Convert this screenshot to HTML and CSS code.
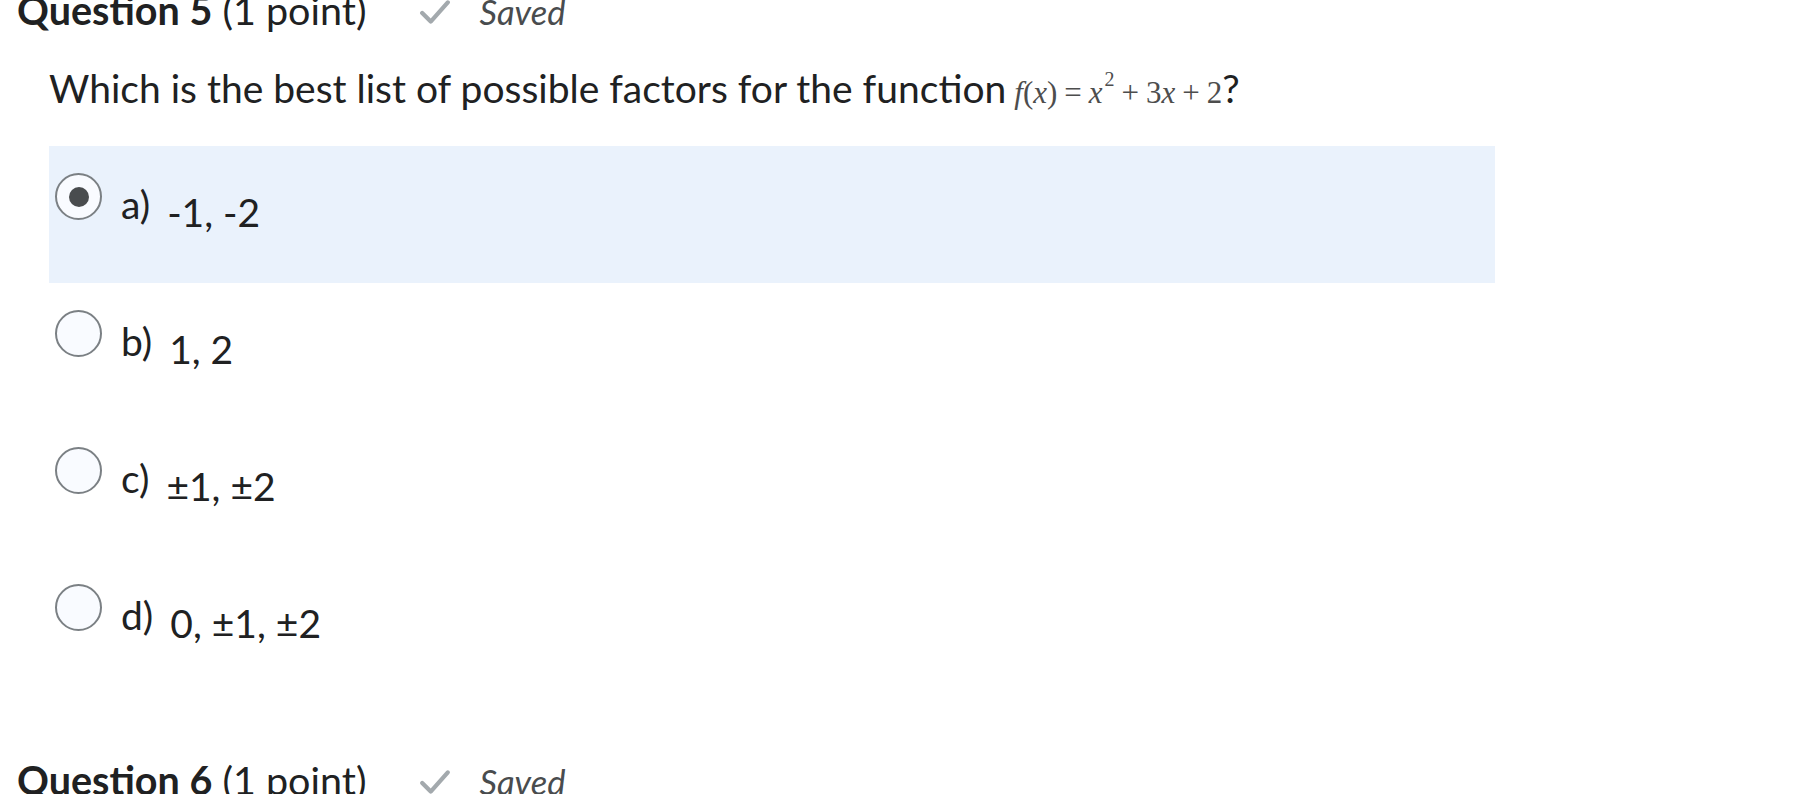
FILE: index.html
```html
<!DOCTYPE html>
<html lang="en">
<head>
<meta charset="utf-8">
<title>Quiz</title>
<link rel="stylesheet" href="styles.css">
</head>
<body>
<div class="page">
  <section class="question">
    <div class="q-head">
      <h2 class="q-title"><strong>Question 5</strong> (1 point)</h2>
      <span class="saved">
        <svg class="check" viewBox="0 0 30 24" width="30" height="24"><path d="M3 13 L11 21 L27 3" fill="none" stroke="#a3a9ad" stroke-width="4" stroke-linecap="round" stroke-linejoin="round"/></svg>
        <span class="saved-text">Saved</span>
      </span>
    </div>
    <p class="q-text">Which is the best list of possible factors for the function <span class="math"><i>f</i>(<i>x</i>)<span class="op">=</span><i>x</i><sup>2</sup><span class="op">+</span>3<i>x</i><span class="op">+</span>2</span>?</p>
    <div class="options">
      <div class="option selected">
        <span class="radio"><span class="dot"></span></span>
        <span class="opt-letter">a)</span>
        <span class="opt-value">-1, -2</span>
      </div>
      <div class="option">
        <span class="radio"></span>
        <span class="opt-letter">b)</span>
        <span class="opt-value">1, 2</span>
      </div>
      <div class="option">
        <span class="radio"></span>
        <span class="opt-letter">c)</span>
        <span class="opt-value">±1, ±2</span>
      </div>
      <div class="option">
        <span class="radio"></span>
        <span class="opt-letter">d)</span>
        <span class="opt-value">0, ±1, ±2</span>
      </div>
    </div>
  </section>
  <section class="question next">
    <div class="q-head">
      <h2 class="q-title"><strong>Question 6</strong> (1 point)</h2>
      <span class="saved">
        <svg class="check" viewBox="0 0 30 24" width="30" height="24"><path d="M3 13 L11 21 L27 3" fill="none" stroke="#a3a9ad" stroke-width="4" stroke-linecap="round" stroke-linejoin="round"/></svg>
        <span class="saved-text">Saved</span>
      </span>
    </div>
  </section>
</div>
</body>
</html>
```

FILE: styles.css
```css
html, body {
  margin: 0;
  padding: 0;
  background: #ffffff;
}
body {
  font-family: Lato, "Noto Sans", sans-serif;
  color: #202122;
  font-size: 39px;
  line-height: 46px;
  overflow: hidden;
}
.page {
  margin-top: -13px;
}
.q-head {
  display: flex;
  align-items: baseline;
  padding-left: 17px;
  height: 46px;
}
.q-title {
  margin: 0;
  font-size: 39.5px;
  font-weight: 400;
  line-height: 46px;
  white-space: nowrap;
}
.q-title strong {
  font-weight: 700;
}
.saved {
  display: flex;
  align-items: baseline;
  margin-left: 53px;
  color: #494c4e;
}
.check {
  align-self: center;
  width: 32px;
  height: 26px;
  margin-right: 28px;
}
.saved-text {
  font-style: italic;
  font-size: 34.5px;
}
.q-text {
  margin: 32px 0 0 49px;
  line-height: 46px;
  white-space: nowrap;
}
.math {
  font-family: "Liberation Serif", "Times New Roman", serif;
  font-size: 31px;
  color: #4d4d4d;
  margin-left: -2px;
}
.math i {
  font-style: italic;
}
.math .op {
  padding: 0 7px;
}
.math sup {
  font-size: 20px;
  vertical-align: 17px;
  line-height: 0;
  padding-left: 2px;
}
.options {
  margin: 30px 0 0 49px;
  width: 1446px;
}
.option {
  display: flex;
  align-items: flex-start;
  height: 137px;
  padding-left: 6px;
  box-sizing: border-box;
}
.option.selected {
  background: #eaf2fc;
}
.radio {
  flex-shrink: 0;
  width: 47px;
  height: 47px;
  margin-top: 27px;
  box-sizing: border-box;
  border: 2px solid #7b8084;
  border-radius: 50%;
  background: #f9fbff;
  display: flex;
  align-items: center;
  justify-content: center;
}
.dot {
  width: 20px;
  height: 20px;
  border-radius: 50%;
  background: #494c4e;
}
.opt-letter {
  margin-left: 19px;
  margin-top: 35px;
}
.opt-value {
  margin-left: 17px;
  margin-top: 43px;
}
.next {
  margin-top: 63px;
}
```
